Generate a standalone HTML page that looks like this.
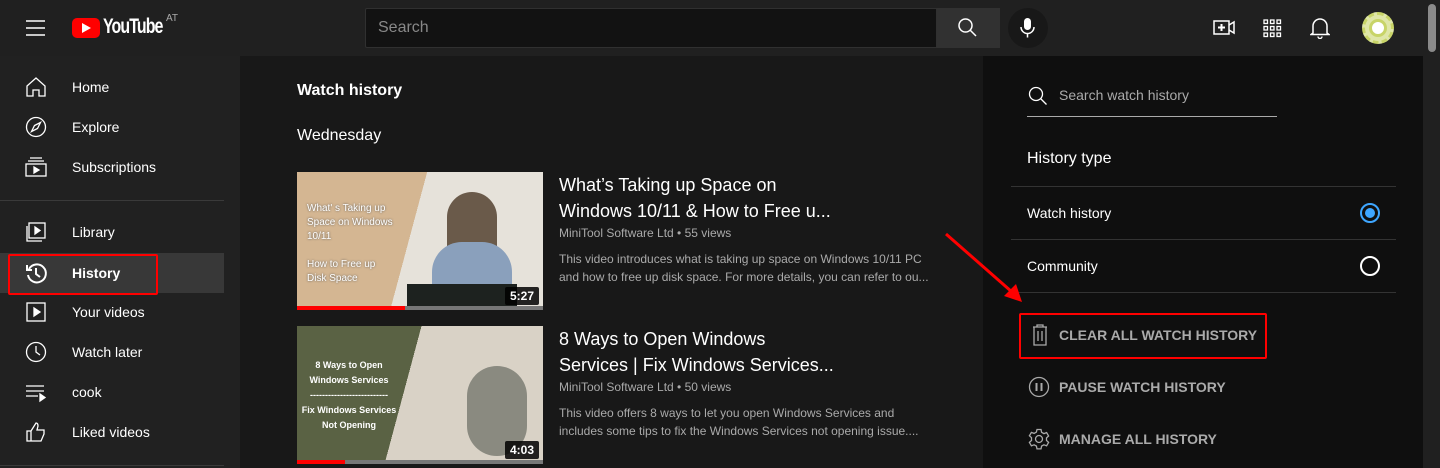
<!DOCTYPE html>
<html><head><meta charset="utf-8"><style>
*{margin:0;padding:0;box-sizing:border-box}
body{width:1440px;height:468px;overflow:hidden;background:#181818;font-family:"Liberation Sans",sans-serif;color:#fff;position:relative}
.hdr{position:absolute;left:0;top:0;width:1440px;height:56px;background:#202020}
.side{position:absolute;left:0;top:56px;width:240px;height:412px;background:#212121}
.item{position:absolute;left:0;width:224px;height:40px;font-size:14px;line-height:40px}
.item span{position:absolute;left:72px}
.item svg{position:absolute;left:24px;top:8px}
.panel{position:absolute;left:983px;top:56px;width:440px;height:412px;background:#0f0f0f}
.sb{position:absolute;left:1423px;top:0;width:17px;height:468px;background:#202020}
.thumb{position:absolute;left:297px;width:246px;height:138px;overflow:hidden}
.t{position:absolute;left:559px;font-size:18px;line-height:26px;color:#fff}
.m{position:absolute;left:559px;font-size:12px;color:#aaa}
.d{position:absolute;left:559px;font-size:12px;line-height:18px;color:#aaa}
.btn{position:absolute;left:1059px;font-size:14px;font-weight:bold;color:#aaa;letter-spacing:0}
</style></head><body>
<div class="hdr"></div>
<svg style="position:absolute;left:26px;top:19px" width="20" height="18"><path d="M0 2h19M0 9h19M0 16h19" stroke="#fff" stroke-width="1.6"/></svg>
<div style="position:absolute;left:72px;top:18px;width:28px;height:20px;background:#f00;border-radius:5px"></div>
<svg style="position:absolute;left:82px;top:23px" width="10" height="10"><path d="M0 0L9 5L0 10z" fill="#fff"/></svg>
<div style="position:absolute;left:103px;top:15px;font-size:21px;font-weight:bold;letter-spacing:-1.2px;transform:scaleX(.76);transform-origin:left">YouTube</div>
<div style="position:absolute;left:166px;top:13px;font-size:10px;color:#aaa">AT</div>
<div style="position:absolute;left:365px;top:8px;width:572px;height:40px;background:#121212;border:1px solid #303030;border-radius:2px 0 0 2px;font-size:16px;color:#888;line-height:38px;padding-left:12px">Search</div>
<div style="position:absolute;left:937px;top:8px;width:63px;height:40px;background:#313131"></div>
<svg style="position:absolute;left:957px;top:17px" width="22" height="22"><circle cx="8.5" cy="8.5" r="6.5" stroke="#fff" stroke-width="1.5" fill="none"/><path d="M13 13l6 6" stroke="#fff" stroke-width="1.5"/></svg>
<div style="position:absolute;left:1008px;top:8px;width:40px;height:40px;border-radius:50%;background:#181818"></div>
<svg style="position:absolute;left:1018px;top:17px" width="20" height="22"><rect x="6" y="1" width="7" height="12" rx="3.5" fill="#fff"/><path d="M3 10a6.5 6.5 0 0 0 13 0M9.5 16.5v4" stroke="#fff" stroke-width="1.5" fill="none"/></svg>
<svg style="position:absolute;left:1213px;top:17px" width="24" height="22"><rect x="1" y="4" width="15" height="13" stroke="#fff" stroke-width="1.5" fill="none"/><path d="M8.5 7v7M5 10.5h7" stroke="#fff" stroke-width="2"/><path d="M16 8l5-3v11l-5-3" stroke="#fff" stroke-width="1.5" fill="none"/></svg>
<svg style="position:absolute;left:1263px;top:19px" width="19" height="19" fill="none" stroke="#fff" stroke-width="1.3"><rect x="1" y="1" width="3.5" height="3.5"/><rect x="7.5" y="1" width="3.5" height="3.5"/><rect x="14" y="1" width="3.5" height="3.5"/><rect x="1" y="7.5" width="3.5" height="3.5"/><rect x="7.5" y="7.5" width="3.5" height="3.5"/><rect x="14" y="7.5" width="3.5" height="3.5"/><rect x="1" y="14" width="3.5" height="3.5"/><rect x="7.5" y="14" width="3.5" height="3.5"/><rect x="14" y="14" width="3.5" height="3.5"/></svg>
<svg style="position:absolute;left:1310px;top:17px" width="20" height="22"><path d="M3 16V9a7 7 0 0 1 14 0v7l2 1.5H1z" stroke="#fff" stroke-width="1.5" fill="none"/><path d="M8 19.5a2 2 0 0 0 4 0" stroke="#fff" stroke-width="1.4" fill="none"/></svg>
<div style="position:absolute;left:1362px;top:12px;width:32px;height:32px;border-radius:50%;background:#dfe6a8;border:3px dashed #c8d468"></div>
<div style="position:absolute;left:1369px;top:19px;width:18px;height:18px;border-radius:50%;background:#fff;border:3px solid #c8d468"></div>
<div class="sb"></div>
<div style="position:absolute;left:1428px;top:4px;width:8px;height:48px;border-radius:4px;background:#8a8a8a"></div>

<div class="side"></div>
<div class="item" style="top:67px"><svg width="24" height="24" fill="none" stroke="#fff" stroke-width="1.3"><path d="M3 11L12 3l9 8v10h-6v-6H9v6H3z"/></svg><span>Home</span></div>
<div class="item" style="top:107px"><svg width="24" height="24" fill="none" stroke="#fff" stroke-width="1.3"><circle cx="12" cy="12" r="9.5"/><path d="M16.5 7.5l-6 3-3 6 6-3z"/></svg><span>Explore</span></div>
<div class="item" style="top:147px"><svg width="24" height="24" fill="none" stroke="#fff" stroke-width="1.3"><path d="M6 3h12M4 6h16"/><rect x="2" y="9" width="20" height="12"/><path d="M10 12v6l5-3z" fill="#fff"/></svg><span>Subscriptions</span></div>
<div style="position:absolute;left:0;top:200px;width:224px;height:1px;background:#3a3a3a"></div>
<div class="item" style="top:212px"><svg width="24" height="24" fill="none" stroke="#fff" stroke-width="1.3"><rect x="5" y="3" width="16" height="15"/><path d="M3 6v15h15"/><path d="M11 7v7l5-3.5z" fill="#fff"/></svg><span>Library</span></div>
<div class="item" style="top:253px;background:#383838;font-weight:bold"><svg width="24" height="24" fill="none" stroke="#fff" stroke-width="2"><path d="M5 8a9 9 0 1 1-1 6"/><path d="M3 4v5h5M12 7v6l4 3"/></svg><span>History</span></div>
<div style="position:absolute;left:8px;top:254px;width:150px;height:41px;border:2px solid #f00;border-radius:2px"></div>
<div class="item" style="top:292px"><svg width="24" height="24" fill="none" stroke="#fff" stroke-width="1.3"><rect x="3" y="3" width="18" height="18"/><path d="M10 8v8l6-4z" fill="#fff"/></svg><span>Your videos</span></div>
<div class="item" style="top:332px"><svg width="24" height="24" fill="none" stroke="#fff" stroke-width="1.3"><circle cx="12" cy="12" r="9.5"/><path d="M12 6v6l4 3"/></svg><span>Watch later</span></div>
<div class="item" style="top:372px"><svg width="24" height="24" fill="none" stroke="#fff" stroke-width="1.3"><path d="M2 6h18M2 11h18M2 16h12"/><path d="M16 14v7l5-3.5z" fill="#fff"/></svg><span>cook</span></div>
<div class="item" style="top:412px"><svg width="24" height="24" fill="none" stroke="#fff" stroke-width="1.3"><path d="M3 11h4v10H3zM7 11l5-8c2 0 2 2 2 3l-1 4h7v4l-3 7H7"/></svg><span>Liked videos</span></div>
<div style="position:absolute;left:0;top:465px;width:224px;height:1px;background:#3a3a3a"></div>

<div style="position:absolute;left:297px;top:82px;font-size:16px;font-weight:bold">Watch history</div>
<div style="position:absolute;left:297px;top:127px;font-size:16px">Wednesday</div>

<div class="thumb" style="top:172px;background:linear-gradient(105deg,#d4b692 0 46%,#e6e2da 46%)">
 <div style="position:absolute;left:10px;top:30px;font-size:10px;line-height:14px;color:#fff;text-shadow:0 0 2px #555">What' s Taking up<br>Space on Windows<br>10/11<br><br>How to Free up<br>Disk Space</div>
 <div style="position:absolute;left:150px;top:20px;width:50px;height:90px;background:#6a5a4a;border-radius:25px 25px 0 0"></div>
 <div style="position:absolute;left:135px;top:70px;width:80px;height:68px;background:#8aa0bc;border-radius:30px 30px 0 0"></div>
 <div style="position:absolute;left:110px;top:112px;width:110px;height:22px;background:#1d221f"></div>
 <div style="position:absolute;left:208px;top:115px;width:34px;height:18px;background:rgba(0,0,0,.85);border-radius:2px;font-size:12px;font-weight:bold;line-height:18px;text-align:center">5:27</div>
 <div style="position:absolute;left:0;top:134px;width:246px;height:4px;background:#777"></div>
 <div style="position:absolute;left:0;top:134px;width:108px;height:4px;background:#f00"></div>
</div>
<div class="t" style="top:172px">What’s Taking up Space on<br>Windows 10/11 &amp; How to Free u...</div>
<div class="m" style="top:226px">MiniTool Software Ltd • 55 views</div>
<div class="d" style="top:250px">This video introduces what is taking up space on Windows 10/11 PC<br>and how to free up disk space. For more details, you can refer to ou...</div>

<div class="thumb" style="top:326px;background:linear-gradient(105deg,#5a6244 0 44%,#d9d2c6 44%)">
 <div style="position:absolute;left:0;top:32px;width:104px;text-align:center;font-size:9px;line-height:15px;color:#fff;font-weight:bold">8 Ways to Open<br>Windows Services<br>--------------------------<br>Fix Windows Services<br>Not Opening</div>
 <div style="position:absolute;left:170px;top:40px;width:60px;height:90px;background:#8a8a80;border-radius:30px"></div>
 <div style="position:absolute;left:208px;top:115px;width:34px;height:18px;background:rgba(0,0,0,.85);border-radius:2px;font-size:12px;font-weight:bold;line-height:18px;text-align:center">4:03</div>
 <div style="position:absolute;left:0;top:134px;width:246px;height:4px;background:#777"></div>
 <div style="position:absolute;left:0;top:134px;width:48px;height:4px;background:#f00"></div>
</div>
<div class="t" style="top:326px">8 Ways to Open Windows<br>Services | Fix Windows Services...</div>
<div class="m" style="top:380px">MiniTool Software Ltd • 50 views</div>
<div class="d" style="top:404px">This video offers 8 ways to let you open Windows Services and<br>includes some tips to fix the Windows Services not opening issue....</div>

<div class="panel"></div>
<svg style="position:absolute;left:1028px;top:86px" width="20" height="20"><circle cx="8" cy="8" r="6.5" stroke="#fff" stroke-width="1.3" fill="none"/><path d="M12.5 12.5l6 6" stroke="#fff" stroke-width="1.3"/></svg>
<div style="position:absolute;left:1059px;top:87px;font-size:14px;color:#aaa">Search watch history</div>
<div style="position:absolute;left:1027px;top:116px;width:250px;height:1px;background:#aaa"></div>
<div style="position:absolute;left:1027px;top:150px;font-size:16px">History type</div>
<div style="position:absolute;left:1011px;top:186px;width:385px;height:1px;background:#333"></div>
<div style="position:absolute;left:1027px;top:205px;font-size:14px">Watch history</div>
<div style="position:absolute;left:1360px;top:203px;width:20px;height:20px;border-radius:50%;border:2px solid #3ea6ff"></div>
<div style="position:absolute;left:1365px;top:208px;width:10px;height:10px;border-radius:50%;background:#3ea6ff"></div>
<div style="position:absolute;left:1011px;top:239px;width:385px;height:1px;background:#333"></div>
<div style="position:absolute;left:1027px;top:258px;font-size:14px">Community</div>
<div style="position:absolute;left:1360px;top:256px;width:20px;height:20px;border-radius:50%;border:2px solid #fff"></div>
<div style="position:absolute;left:1011px;top:292px;width:385px;height:1px;background:#333"></div>
<svg style="position:absolute;left:944px;top:232px" width="80" height="72"><path d="M2 2L68 60" stroke="#f00" stroke-width="3"/><path d="M78 70L60 64L72 52z" fill="#f00"/></svg>
<div style="position:absolute;left:1019px;top:313px;width:248px;height:46px;border:2px solid #f00;border-radius:2px"></div>
<svg style="position:absolute;left:1031px;top:324px" width="18" height="22" fill="none" stroke="#aaa" stroke-width="1.3"><path d="M2 3h14M6 3V1h6v2M3 3v18h12V3M7 7v10M11 7v10"/></svg>
<div class="btn" style="top:327px">CLEAR ALL WATCH HISTORY</div>
<svg style="position:absolute;left:1028px;top:376px" width="22" height="22" fill="none" stroke="#aaa" stroke-width="1.3"><circle cx="11" cy="11" r="9.5"/><path d="M8.5 7v8M13.5 7v8" stroke-width="2"/></svg>
<div class="btn" style="top:379px">PAUSE WATCH HISTORY</div>
<svg style="position:absolute;left:1028px;top:428px" width="22" height="22" fill="none" stroke="#aaa" stroke-width="1.3"><circle cx="11" cy="11" r="3.5"/><path d="M9 1.5h4l.6 2.8 2.3 1.3 2.7-1 2 3.4-2.1 1.9v2.6l2.1 1.9-2 3.4-2.7-1-2.3 1.3-.6 2.8H9l-.6-2.8-2.3-1.3-2.7 1-2-3.4 2.1-1.9V9.7L1.4 7.8l2-3.4 2.7 1 2.3-1.3z"/></svg>
<div class="btn" style="top:431px">MANAGE ALL HISTORY</div>
</body></html>
